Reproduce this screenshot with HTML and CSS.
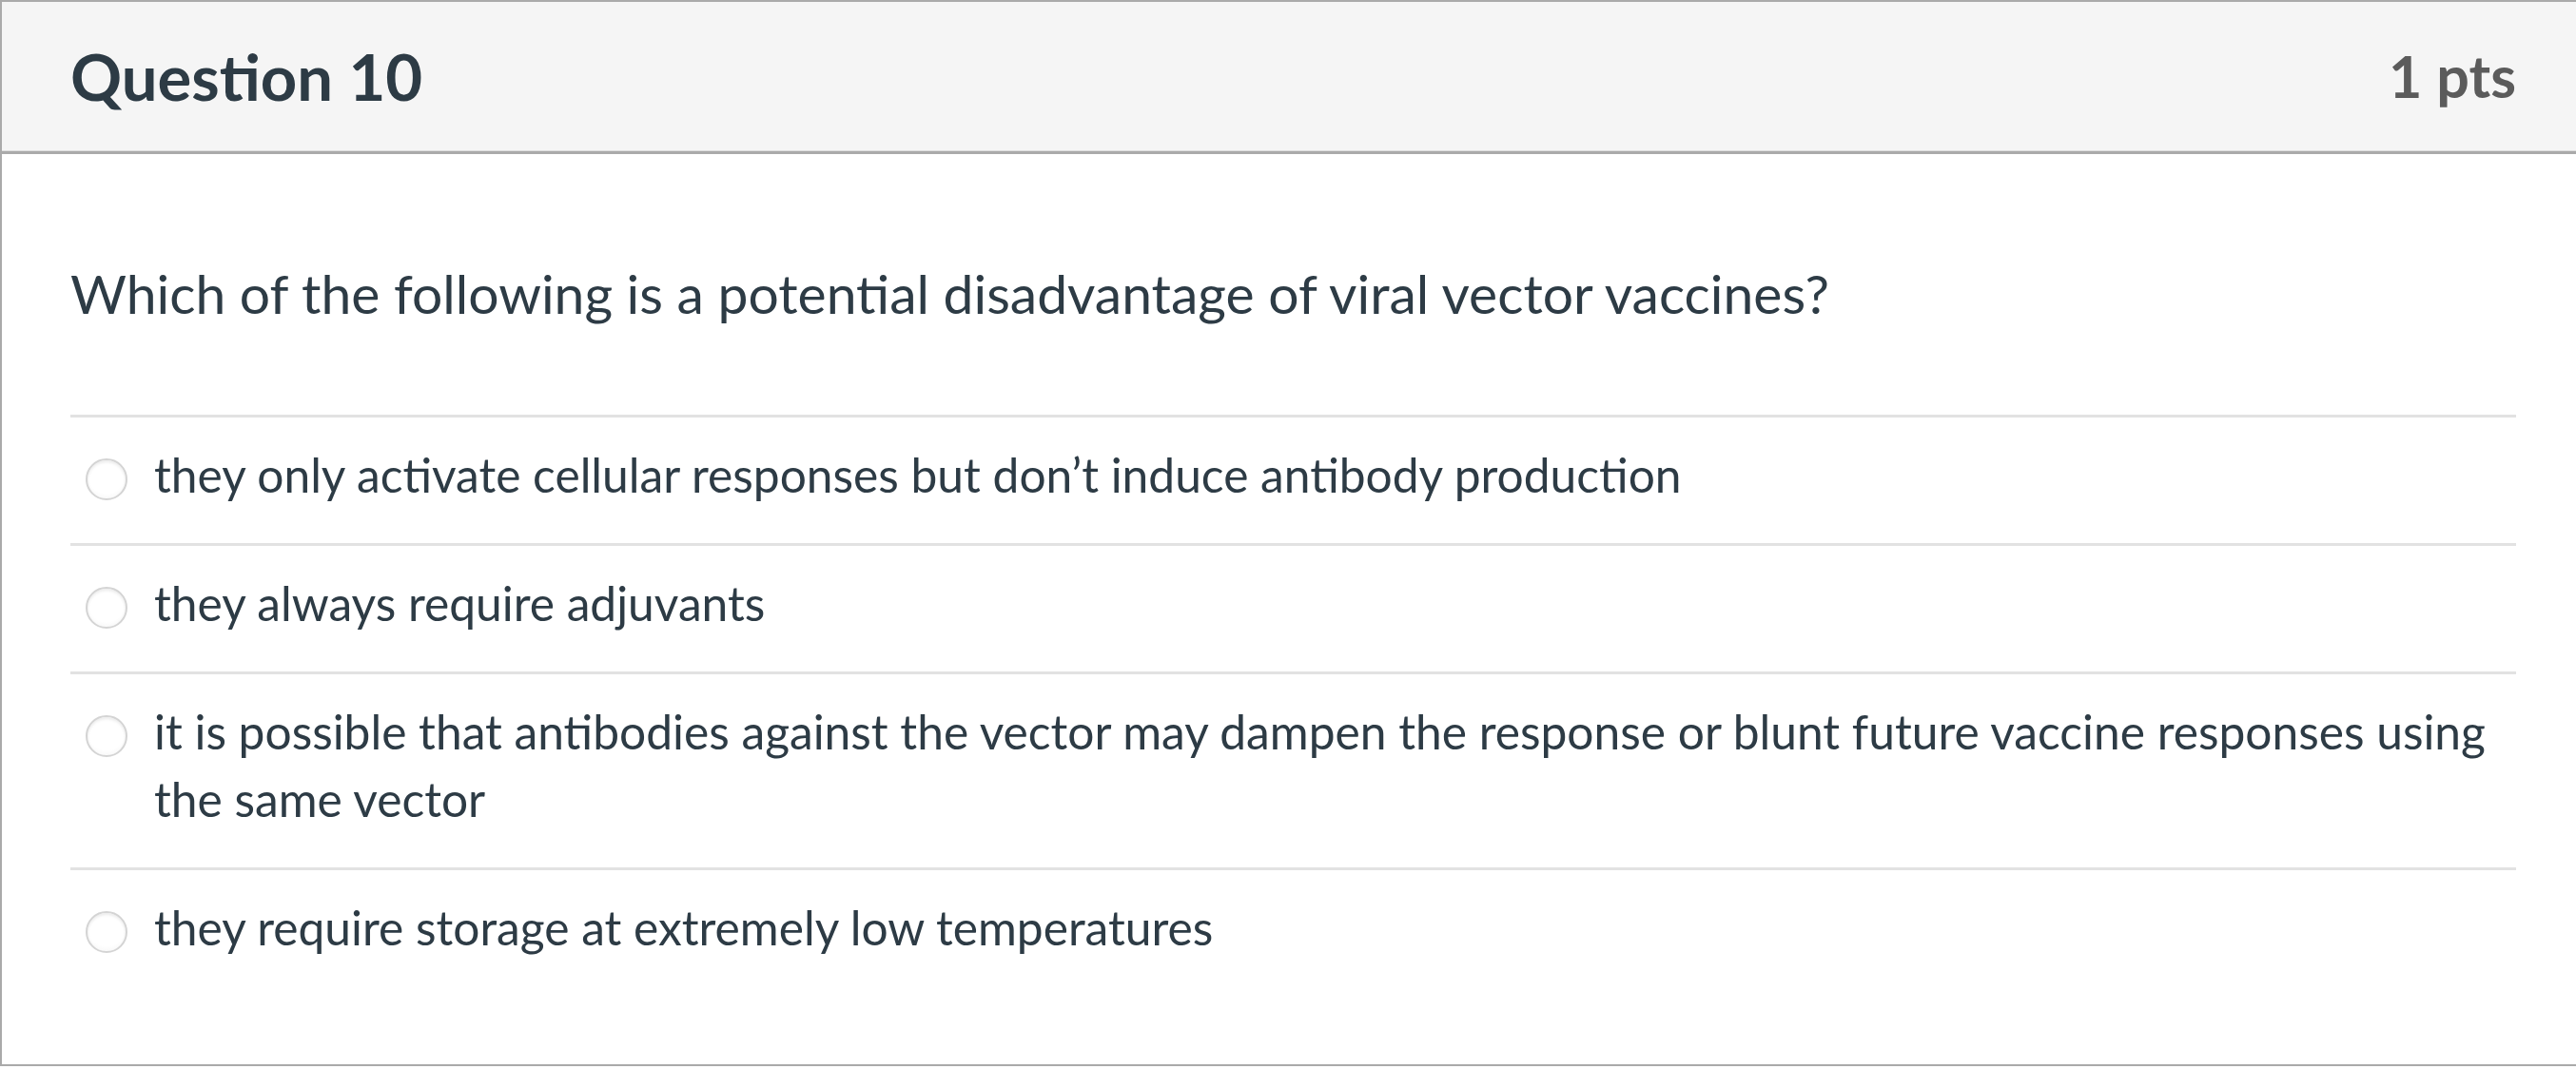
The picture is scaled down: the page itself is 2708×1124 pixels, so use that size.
FILE: index.html
```html
<!DOCTYPE html>
<html lang="en">
<head>
<meta charset="utf-8">
<title>Question 10</title>
<link rel="stylesheet" href="styles.css">
</head>
<body>
<div class="question">
  <div class="header">
    <span class="question-name">Question 10</span>
    <span class="question-points">1 pts</span>
  </div>
  <div class="question-text">Which of the following is a potential disadvantage of viral vector vaccines?</div>
  <div class="answers">
    <label class="answer"><span class="radio"></span><span class="answer-text">they only activate cellular responses but don’t induce antibody production</span></label>
    <label class="answer"><span class="radio"></span><span class="answer-text">they always require adjuvants</span></label>
    <label class="answer"><span class="radio"></span><span class="answer-text">it is possible that antibodies against the vector may dampen the response or blunt future vaccine responses using the same vector</span></label>
    <label class="answer"><span class="radio"></span><span class="answer-text">they require storage at extremely low temperatures</span></label>
  </div>
</div>
</body>
</html>
```

FILE: styles.css
```css
html, body {
  margin: 0;
  padding: 0;
  background: #ffffff;
  overflow: hidden;
}

body {
  font-family: Lato, "Open Sans", "Liberation Sans", sans-serif;
  color: #2d3b45;
}

.question {
  width: 2720px;
  box-sizing: border-box;
  border: 2px solid #aaaaaa;
  height: 1121px;
}

.header {
  display: flex;
  justify-content: space-between;
  align-items: center;
  box-sizing: border-box;
  height: 160px;
  padding: 0 73px 2px 72px;
  background: #f5f5f5;
  border-bottom: 3px solid #aaaaaa;
  box-shadow: inset 0 -1px 0 #dddddd;
}

.question-name {
  font-size: 67px;
  font-weight: 700;
  color: #2d3b45;
}

.question-points {
  font-size: 61px;
  font-weight: 700;
  color: #5b5b5b;
}

.question-text {
  font-size: 57px;
  line-height: 84px;
  padding: 104px 0 0 72px;
}

.answers {
  margin: 86px 73px 0 72px;
}

.answer {
  display: flex;
  align-items: flex-start;
  border-top: 3px solid #e2e2e2;
  padding: 25px 0 36px 0;
  font-size: 49.7px;
  line-height: 71px;
}

.radio {
  flex: none;
  box-sizing: border-box;
  width: 44px;
  height: 44px;
  margin: 18px 28px 0 16px;
  border-radius: 50%;
  border: 2px solid #d4d4d4;
  background: radial-gradient(circle at 50% 40%, #ffffff 60%, #f1f1f1 100%);
  box-shadow: inset 0 2px 3px rgba(0, 0, 0, 0.08);
}

.answer-text {
  flex: 1;
}
```
